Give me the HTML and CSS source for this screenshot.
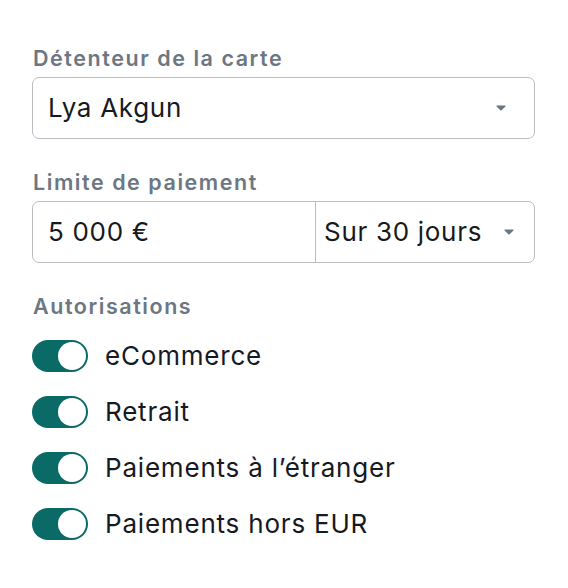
FILE: index.html
```html
<!DOCTYPE html>
<html lang="fr">
<head>
<meta charset="utf-8">
<title>Carte</title>
<link rel="stylesheet" href="styles.css">
</head>
<body>
<div class="form">
  <div class="field">
    <div class="label">Détenteur de la carte</div>
    <div class="box select">
      <span class="value">Lya Akgun</span>
      <svg class="caret" width="10" height="6" viewBox="0 0 10 6"><path d="M1 0.5h8a0.6 0.6 0 0 1 0.45 1L5.4 5.4a0.6 0.6 0 0 1-0.8 0L0.55 1.5A0.6 0.6 0 0 1 1 0.5z" fill="#6c7682"/></svg>
    </div>
  </div>
  <div class="field">
    <div class="label">Limite de paiement</div>
    <div class="box combo">
      <div class="amount"><span class="value">5 000 €</span></div>
      <div class="period">
        <span class="value">Sur 30 jours</span>
        <svg class="caret" width="10" height="6" viewBox="0 0 10 6"><path d="M1 0.5h8a0.6 0.6 0 0 1 0.45 1L5.4 5.4a0.6 0.6 0 0 1-0.8 0L0.55 1.5A0.6 0.6 0 0 1 1 0.5z" fill="#6c7682"/></svg>
      </div>
    </div>
  </div>
  <div class="field last">
    <div class="label">Autorisations</div>
    <div class="toggles">
      <div class="toggle"><span class="switch"><span class="knob"></span></span><span class="tlabel">eCommerce</span></div>
      <div class="toggle"><span class="switch"><span class="knob"></span></span><span class="tlabel">Retrait</span></div>
      <div class="toggle"><span class="switch"><span class="knob"></span></span><span class="tlabel">Paiements à l’étranger</span></div>
      <div class="toggle"><span class="switch"><span class="knob"></span></span><span class="tlabel">Paiements hors EUR</span></div>
    </div>
  </div>
</div>
</body>
</html>
```

FILE: styles.css
```css
html, body {
  margin: 0;
  padding: 0;
  background: #ffffff;
}
body {
  font-family: Inter, "Noto Sans", "Liberation Sans", sans-serif;
  color: #161a1f;
}
.form {
  padding: 46px 33px 0 32px;
  display: flex;
  flex-direction: column;
}
.field {
  display: flex;
  flex-direction: column;
  margin-bottom: 31px;
}
.field.last {
  margin-bottom: 0;
}
.label {
  font-size: 21.5px;
  line-height: 24px;
  font-weight: 600;
  letter-spacing: 1.55px;
  color: #6c7783;
  margin-bottom: 7px;
  padding-left: 1px;
}
.box {
  height: 62px;
  box-sizing: border-box;
  border: 1.5px solid #babec3;
  border-radius: 7px;
  display: flex;
  align-items: center;
}
.value {
  font-size: 26px;
  line-height: 32px;
  letter-spacing: 0.7px;
  color: #161a1f;
}
.select {
  justify-content: space-between;
  padding: 0 28px 0 15px;
}
.caret {
  display: block;
}
.combo {
  align-items: stretch;
}
.amount {
  width: 283px;
  box-sizing: border-box;
  padding-left: 15px;
  display: flex;
  align-items: center;
  border-right: 1.5px solid #babec3;
}
.period {
  flex: 1;
  display: flex;
  align-items: center;
  justify-content: space-between;
  padding: 0 20px 0 8px;
}
.toggles {
  display: flex;
  flex-direction: column;
  gap: 24px;
  margin-top: 15px;
}
.toggle {
  display: flex;
  align-items: center;
  gap: 17px;
  height: 32px;
}
.switch {
  width: 56px;
  height: 32px;
  border-radius: 16px;
  background: #0a6b66;
  position: relative;
  flex: none;
}
.knob {
  position: absolute;
  top: 2px;
  right: 2px;
  width: 28px;
  height: 28px;
  border-radius: 50%;
  background: #ffffff;
}
.tlabel {
  font-size: 26px;
  line-height: 32px;
  letter-spacing: 0.8px;
  color: #161a1f;
}
```
